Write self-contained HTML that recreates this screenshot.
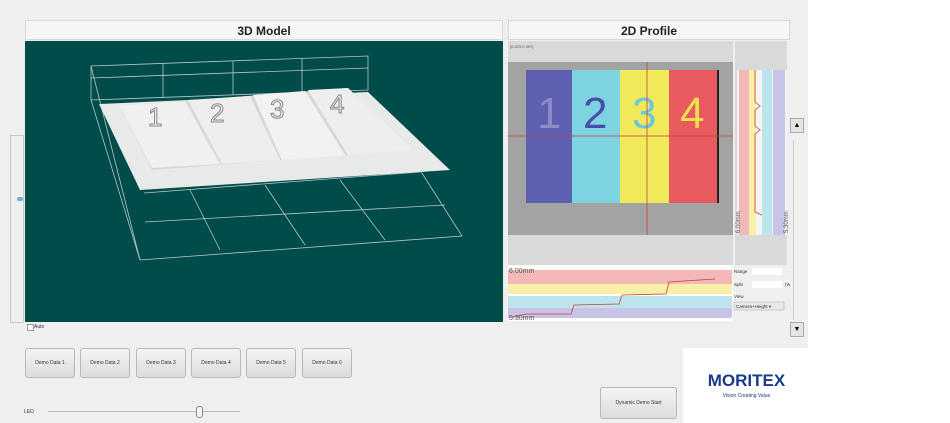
<!DOCTYPE html>
<html><head><meta charset="utf-8"><style>
body{margin:0;width:950px;height:423px;background:#fff;overflow:hidden;font-family:"Liberation Sans",sans-serif;position:relative}
.a{position:absolute}
.btn{position:absolute;top:348px;width:48px;height:28px;background:linear-gradient(#f4f4f4,#dcdcdc);border:1px solid #b8b8b8;border-radius:3px;font-size:5px;color:#333;text-align:center;line-height:28px}
</style></head><body>
<div class="a" style="left:0;top:0;width:808px;height:423px;background:#efefef"></div>
<!-- 3D header -->
<div class="a" style="left:25px;top:20px;width:478px;height:20px;background:#f6f6f6;border:1px solid #d8d8d8;box-sizing:border-box;font-weight:bold;font-size:12px;text-align:center;line-height:20px;color:#222">3D Model</div>
<div class="a" style="left:508px;top:20px;width:282px;height:20px;background:#f6f6f6;border:1px solid #d8d8d8;box-sizing:border-box;font-weight:bold;font-size:12px;text-align:center;line-height:20px;color:#222">2D Profile</div>
<!-- left slider -->
<div class="a" style="left:10px;top:135px;width:14px;height:188px;border:1px solid #c8c8c8;box-sizing:border-box"></div>
<div class="a" style="left:17px;top:197px;width:6px;height:4px;background:#6ab0d8;border-radius:2px"></div>
<svg class="a" style="left:25px;top:41px" width="478" height="281" viewBox="25 41 478 281">
<rect x="25" y="41" width="478" height="281" fill="#004c4a"/>
<g stroke="#b8c8c4" stroke-width="0.8" fill="none">
<polygon points="91,66 368,56 368,90 91,100"/>
<line x1="163" y1="63" x2="163" y2="98"/><line x1="233" y1="61" x2="233" y2="95"/><line x1="302" y1="58" x2="302" y2="93"/>
<line x1="91" y1="78" x2="368" y2="68"/>
<line x1="91" y1="66" x2="140" y2="260"/><line x1="91" y1="100" x2="140" y2="260"/>
<polyline points="140,260 462,236 420,170"/>
<line x1="144" y1="193" x2="420" y2="172"/><line x1="145" y1="222" x2="445" y2="205"/>
<line x1="190" y1="190" x2="220" y2="250"/><line x1="265" y1="185" x2="305" y2="245"/><line x1="340" y1="180" x2="385" y2="240"/>
</g>
<polygon points="99,104 368,92 450,170 140,190" fill="#e8eaea"/>
<polygon points="120,106 348,88 410,150 152,170" fill="#d6d8d8"/>
<polygon points="120,106 185,101 220,164 152,168" fill="#f0f0f0"/>
<polygon points="188,100 250,96 280,160 222,164" fill="#eeeeee"/>
<polygon points="253,95 305,91 345,155 282,160" fill="#f2f2f2"/>
<polygon points="308,90 348,88 413,150 348,155" fill="#eeeeee"/>
<g font-size="26" fill="none" stroke="#888" stroke-width="1" font-family="Liberation Sans">
<text x="148" y="126">1</text><text x="210" y="122">2</text><text x="270" y="118">3</text><text x="330" y="113">4</text></g>
</svg>
<div class="a" style="left:27px;top:324px;width:5px;height:5px;border:1px solid #999;background:#fff"></div>
<div class="a" style="left:34px;top:324px;font-size:5px;color:#333">Auto</div>
<!-- 2D -->
<svg class="a" style="left:508px;top:41px" width="282" height="280" viewBox="508 41 282 280">
<rect x="508" y="41" width="225" height="280" fill="#d9d9d9"/>
<text x="510" y="48" font-size="4" fill="#555">[0.423,0.397]</text>
<rect x="508" y="62" width="225" height="173" fill="#a3a3a3"/>
<rect x="526" y="70" width="46" height="133" fill="#5d5fb0"/>
<rect x="572" y="70" width="48" height="133" fill="#7dd4e0"/>
<rect x="620" y="70" width="49" height="133" fill="#f0ea5a"/>
<rect x="669" y="70" width="48" height="133" fill="#e85a5e"/>
<rect x="717" y="70" width="2" height="133" fill="#222"/>
<g font-size="44" font-family="Liberation Sans">
<text x="537" y="128" fill="#8a8cc8">1</text><text x="583" y="128" fill="#4a4ca8">2</text><text x="632" y="128" fill="#6ac8d8">3</text><text x="680" y="128" fill="#f0e050">4</text></g>
<line x1="508" y1="136" x2="733" y2="136" stroke="#c84040" stroke-width="0.8"/>
<line x1="647" y1="62" x2="647" y2="235" stroke="#c84040" stroke-width="0.8"/>
<rect x="508" y="265" width="225" height="56" fill="#fff"/>
<rect x="508" y="270" width="224" height="14" fill="#f4b8b8"/>
<rect x="508" y="284" width="224" height="10" fill="#f8f0a8"/>
<rect x="508" y="296" width="224" height="12" fill="#bce4ec"/>
<rect x="508" y="308" width="224" height="10" fill="#c8c4e8"/>
<polyline points="512,317 526,314 571,314 574,305 619,304 622,295 666,294 669,282 715,279" fill="none" stroke="#c84030" stroke-width="0.8"/>
<text x="509" y="273" font-size="7" fill="#555">6.00mm</text>
<text x="509" y="320" font-size="7" fill="#555">5.30mm</text>
<rect x="735" y="41" width="52" height="224" fill="#d9d9d9"/>
<rect x="737" y="70" width="50" height="165" fill="#f4f4f4"/>
<rect x="739" y="70" width="10" height="165" fill="#f4b8b8"/>
<rect x="749" y="70" width="7" height="165" fill="#f8f0a8"/>
<rect x="762" y="70" width="10" height="165" fill="#bce4ec"/>
<rect x="773" y="70" width="12" height="165" fill="#c8c4e8"/>
<polyline points="755,70 755,102 760,106 755,110 755,126 760,130 755,134 755,212 762,215" fill="none" stroke="#c84030" stroke-width="0.8"/>
<text x="740" y="233" font-size="6" fill="#555" transform="rotate(-90 740 233)">6.00mm</text>
<text x="788" y="233" font-size="6" fill="#555" transform="rotate(-90 788 233)">5.30mm</text>
<g font-size="4.5" fill="#333"><text x="734" y="273">Range</text><text x="734" y="286">Split</text><text x="734" y="298">View</text><text x="785" y="286">(W)</text></g>
<rect x="752" y="268" width="30" height="7" fill="#fff"/><rect x="752" y="281" width="30" height="7" fill="#fff"/>
<rect x="734" y="302" width="50" height="8" fill="#e8e8e8" stroke="#aaa" stroke-width="0.5"/>
<text x="736" y="308" font-size="4.5" fill="#333">Camera+Height ▾</text>
</svg>
<!-- scroll -->
<div class="a" style="left:793px;top:140px;width:1px;height:180px;background:#ccc"></div>
<div class="a" style="left:790px;top:118px;width:14px;height:15px;background:#e4e4e4;border:1px solid #aaa;box-sizing:border-box;font-size:7px;text-align:center;line-height:14px">▲</div>
<div class="a" style="left:790px;top:322px;width:14px;height:15px;background:#e4e4e4;border:1px solid #aaa;box-sizing:border-box;font-size:7px;text-align:center;line-height:14px">▼</div>
<div class="btn" style="left:25px">Demo Data 1</div>
<div class="btn" style="left:80px">Demo Data 2</div>
<div class="btn" style="left:136px">Demo Data 3</div>
<div class="btn" style="left:191px">Demo Data 4</div>
<div class="btn" style="left:246px">Demo Data 5</div>
<div class="btn" style="left:302px">Demo Data 6</div>
<div class="btn" style="left:600px;top:387px;width:75px;height:30px;line-height:30px">Dynamic Demo Start</div>
<div class="a" style="left:24px;top:409px;font-size:5px;color:#333">LED</div>
<div class="a" style="left:48px;top:411px;width:192px;height:1px;background:#bbb"></div>
<div class="a" style="left:196px;top:406px;width:5px;height:10px;border:1px solid #888;border-radius:3px;background:#f4f4f4"></div>
<div class="a" style="left:683px;top:348px;width:127px;height:75px;background:#fff"></div>
<div class="a" style="left:683px;top:371px;width:127px;text-align:center;font-weight:bold;font-size:17px;color:#1a3a8a">MORITEX</div>
<div class="a" style="left:683px;top:393px;width:127px;text-align:center;font-size:5px;color:#1a3a8a">Vision Creating Value</div>
</body></html>
